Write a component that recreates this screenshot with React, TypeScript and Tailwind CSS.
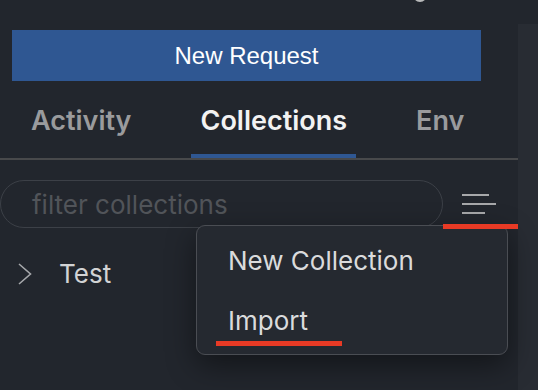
import React from 'react'

const tabs = ['Activity', 'Collections', 'Env']

const App = () => {
    const active = 'Collections'
    return (
        <div className="relative flex w-[538px] h-[390px] overflow-hidden bg-[#22262d] font-['Inter',sans-serif]">
            {/* cut-off control peeking in at the top */}
            <div className="absolute left-[413px] top-[-12px] w-[14px] h-[14px] rounded-full bg-[#b9babb]" />

            <div className="flex flex-col w-[518px]">
                <button className="mt-[30px] ml-[12px] w-[469px] h-[51px] bg-[#2f5792] text-white text-[24px] font-['Liberation_Sans',Arial,sans-serif]">
                    New Request
                </button>

                <div className="flex mt-[24px] pl-[22px] gap-[51px]">
                    {tabs.map((t) => (
                        <div key={t} className="flex flex-col">
                            <span
                                className={`px-[9px] text-[27px] leading-[32px] font-semibold ${
                                    t === active ? 'text-[#f2f2f2]' : 'text-[#9a9b9d]'
                                }`}>
                                {t}
                            </span>
                            <div className={`mt-[17px] h-[4px] ${t === active ? 'bg-[#2f5792]' : 'bg-transparent'}`} />
                        </div>
                    ))}
                </div>
                <div className="h-[2px] bg-[#48494b]" />

                <div className="flex items-center mt-[20px]">
                    <div className="flex items-center w-[443px] h-[48px] rounded-full border-[1.5px] border-[#3c4047] pl-[31px]">
                        <span className="text-[26px] text-[#515459]">filter collections</span>
                    </div>
                    <svg className="ml-[19px]" width="34" height="22" viewBox="0 0 34 22">
                        <rect x="0" y="1" width="27" height="2" fill="#a7a8aa" />
                        <rect x="0" y="10" width="34" height="2" fill="#a7a8aa" />
                        <rect x="0" y="19" width="23" height="2" fill="#a7a8aa" />
                    </svg>
                </div>

                <div className="flex items-center mt-[30px] pl-[18px]">
                    <svg width="14" height="22" viewBox="0 0 14 22">
                        <polyline points="1,1 12.5,11 1,21" fill="none" stroke="#a6a8ab" strokeWidth="1.6" />
                    </svg>
                    <span className="ml-[27px] text-[26px] leading-[32px] text-[#d2d3d4]">Test</span>
                </div>
            </div>

            <div className="mt-[24px] w-[20px] bg-[#282c33]" />

            {/* dropdown menu */}
            <div className="absolute left-[196px] top-[225px] w-[312px] h-[130px] rounded-[9px] border-[1.5px] border-[#4a4d53] bg-[#252930] shadow-[0_10px_30px_rgba(0,0,0,0.45)] flex flex-col gap-[28px] pt-[19px] pl-[31px]">
                <span className="text-[26px] leading-[32px] text-[#dadbdc]">New Collection</span>
                <span className="text-[26px] leading-[32px] text-[#dadbdc]">Import</span>
            </div>

            {/* red annotation marks */}
            <div className="absolute left-[443px] top-[224px] w-[75px] h-[5px] bg-[#e83a25]" />
            <div className="absolute left-[216px] top-[341px] w-[126px] h-[5px] bg-[#e83a25]" />
        </div>
    )
}

export default App
